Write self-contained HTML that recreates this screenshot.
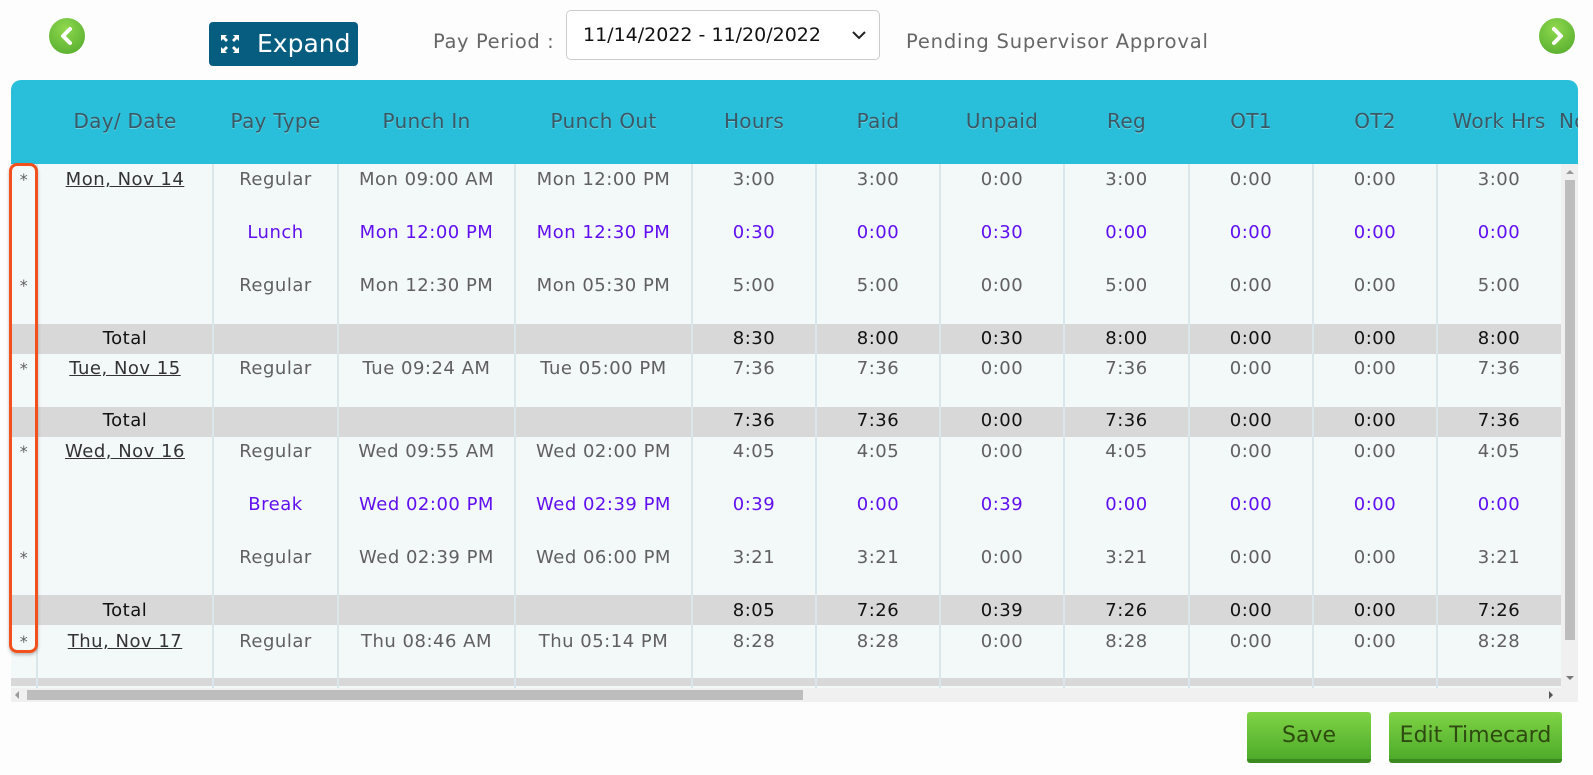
<!DOCTYPE html>
<html><head><meta charset="utf-8"><style>
*{margin:0;padding:0;box-sizing:border-box}
body{width:1593px;height:775px;background:#fdfdfd;font-family:"DejaVu Sans","Liberation Sans",sans-serif;position:relative;overflow:hidden}
.abs{position:absolute}
.circ{position:absolute;width:36px;height:36px;border-radius:50%;background:radial-gradient(circle at 45% 30%,#8fd84e,#4fa82a)}
.circ svg{position:absolute;left:0;top:0}
.tbl{position:absolute;left:11px;top:80px;width:1567px;height:622px;overflow:hidden;border-radius:10px 10px 0 0;background:#f3f8f8}
.hdr{position:absolute;left:0;top:0;width:1567px;height:84px;background:#29bfda}
.h{position:absolute;top:29px;font-size:20px;color:#3b5864;text-align:center;white-space:nowrap;text-shadow:0 1px 0 rgba(255,255,255,.3);letter-spacing:0.3px}
.vl{position:absolute;top:84px;width:2px;height:524px;background:#dbe6ea}
.band{position:absolute;left:0;width:1550px;height:30px;background:#d8d8d8}
.r{position:absolute;left:0;height:22px;width:1550px;font-size:18px;color:#606060;line-height:22px;letter-spacing:0.5px}
.r span{position:absolute;text-align:center;white-space:nowrap}
.b{color:#6010f0}
.t{color:#111}
.s1{left:0;width:26px;font-size:16px}
.s2{left:26px;width:176px}
.s3{left:202px;width:125px}
.s4{left:327px;width:177px}
.s5{left:504px;width:177px}
.s6{left:681px;width:124px}
.s7{left:805px;width:124px}
.s8{left:929px;width:124px}
.s9{left:1053px;width:125px}
.s10{left:1178px;width:124px}
.s11{left:1302px;width:124px}
.s12{left:1426px;width:124px}
u{text-decoration:underline;color:#333}
.btn{position:absolute;top:712px;height:51px;border-radius:3px;background:linear-gradient(#7fd445,#4eab2a);border-bottom:4px solid #3b8a1f;color:#2e4a10;font-size:22px;text-align:center;line-height:48px}
</style></head><body>
<div class="circ" style="left:49px;top:18px"><svg width="36" height="36" viewBox="0 0 36 36"><path d="M21 11l-7 7 7 7" stroke="#fff" stroke-width="4" fill="none" stroke-linecap="round" stroke-linejoin="round"/></svg></div>
<div class="abs" style="left:209px;top:22px;width:149px;height:44px;background:#075d7f;border-radius:4px;color:#fff;font-size:25px;line-height:44px">
<svg class="abs" style="left:12px;top:13px" width="18" height="18" viewBox="0 0 18 18" fill="#fff"><path d="M0 0h6L4 2l3 3-2 2-3-3-2 2zM18 0v6l-2-2-3 3-2-2 3-3-2-2zM0 18v-6l2 2 3-3 2 2-3 3 2 2zM18 18h-6l2-2-3-3 2-2 3 3 2-2z"/></svg>
<span class="abs" style="left:48px;top:0">Expand</span></div>
<div class="abs" style="left:433px;top:30px;font-size:19.5px;color:#666;letter-spacing:0.6px">Pay Period :</div>
<div class="abs" style="left:566px;top:10px;width:314px;height:50px;border:1px solid #ccc;border-radius:5px;background:#fff;font-size:19px;color:#111;line-height:48px;padding-left:16px">11/14/2022 - 11/20/2022
<svg class="abs" style="right:12px;top:19px" width="16" height="10" viewBox="0 0 16 10"><path d="M2 2l6 6 6-6" stroke="#222" stroke-width="2" fill="none"/></svg></div>
<div class="abs" style="left:906px;top:30px;font-size:19.5px;color:#666;letter-spacing:0.8px">Pending Supervisor Approval</div>
<div class="circ" style="left:1539px;top:18px"><svg width="36" height="36" viewBox="0 0 36 36"><path d="M15 11l7 7-7 7" stroke="#fff" stroke-width="4" fill="none" stroke-linecap="round" stroke-linejoin="round"/></svg></div>

<div class="tbl">
<div class="hdr">
<span class="h" style="left:26px;width:176px">Day/ Date</span>
<span class="h" style="left:202px;width:125px">Pay Type</span>
<span class="h" style="left:327px;width:177px">Punch In</span>
<span class="h" style="left:504px;width:177px">Punch Out</span>
<span class="h" style="left:681px;width:124px">Hours</span>
<span class="h" style="left:805px;width:124px">Paid</span>
<span class="h" style="left:929px;width:124px">Unpaid</span>
<span class="h" style="left:1053px;width:125px">Reg</span>
<span class="h" style="left:1178px;width:124px">OT1</span>
<span class="h" style="left:1302px;width:124px">OT2</span>
<span class="h" style="left:1426px;width:124px">Work Hrs</span>
<span class="h" style="left:1548px">No</span>
</div>
<div class="band" style="top:244px"></div>
<div class="band" style="top:327px"></div>
<div class="band" style="top:515px"></div>
<div class="band" style="top:598px;height:8px"></div>
<div class="vl" style="left:25px"></div><div class="vl" style="left:201px"></div><div class="vl" style="left:326px"></div><div class="vl" style="left:503px"></div><div class="vl" style="left:680px"></div><div class="vl" style="left:804px"></div><div class="vl" style="left:928px"></div><div class="vl" style="left:1052px"></div><div class="vl" style="left:1177px"></div><div class="vl" style="left:1301px"></div><div class="vl" style="left:1425px"></div>

<div class="r" style="top:89px"><span class="s1">*</span><span class="s2"><u>Mon, Nov 14</u></span><span class="s3">Regular</span><span class="s4">Mon 09:00 AM</span><span class="s5">Mon 12:00 PM</span><span class="s6">3:00</span><span class="s7">3:00</span><span class="s8">0:00</span><span class="s9">3:00</span><span class="s10">0:00</span><span class="s11">0:00</span><span class="s12">3:00</span></div>
<div class="r b" style="top:142px"><span class="s3">Lunch</span><span class="s4">Mon 12:00 PM</span><span class="s5">Mon 12:30 PM</span><span class="s6">0:30</span><span class="s7">0:00</span><span class="s8">0:30</span><span class="s9">0:00</span><span class="s10">0:00</span><span class="s11">0:00</span><span class="s12">0:00</span></div>
<div class="r" style="top:195px"><span class="s1">*</span><span class="s3">Regular</span><span class="s4">Mon 12:30 PM</span><span class="s5">Mon 05:30 PM</span><span class="s6">5:00</span><span class="s7">5:00</span><span class="s8">0:00</span><span class="s9">5:00</span><span class="s10">0:00</span><span class="s11">0:00</span><span class="s12">5:00</span></div>
<div class="r t" style="top:248px"><span class="s2">Total</span><span class="s6">8:30</span><span class="s7">8:00</span><span class="s8">0:30</span><span class="s9">8:00</span><span class="s10">0:00</span><span class="s11">0:00</span><span class="s12">8:00</span></div>
<div class="r" style="top:278px"><span class="s1">*</span><span class="s2"><u>Tue, Nov 15</u></span><span class="s3">Regular</span><span class="s4">Tue 09:24 AM</span><span class="s5">Tue 05:00 PM</span><span class="s6">7:36</span><span class="s7">7:36</span><span class="s8">0:00</span><span class="s9">7:36</span><span class="s10">0:00</span><span class="s11">0:00</span><span class="s12">7:36</span></div>
<div class="r t" style="top:330px"><span class="s2">Total</span><span class="s6">7:36</span><span class="s7">7:36</span><span class="s8">0:00</span><span class="s9">7:36</span><span class="s10">0:00</span><span class="s11">0:00</span><span class="s12">7:36</span></div>
<div class="r" style="top:361px"><span class="s1">*</span><span class="s2"><u>Wed, Nov 16</u></span><span class="s3">Regular</span><span class="s4">Wed 09:55 AM</span><span class="s5">Wed 02:00 PM</span><span class="s6">4:05</span><span class="s7">4:05</span><span class="s8">0:00</span><span class="s9">4:05</span><span class="s10">0:00</span><span class="s11">0:00</span><span class="s12">4:05</span></div>
<div class="r b" style="top:414px"><span class="s3">Break</span><span class="s4">Wed 02:00 PM</span><span class="s5">Wed 02:39 PM</span><span class="s6">0:39</span><span class="s7">0:00</span><span class="s8">0:39</span><span class="s9">0:00</span><span class="s10">0:00</span><span class="s11">0:00</span><span class="s12">0:00</span></div>
<div class="r" style="top:467px"><span class="s1">*</span><span class="s3">Regular</span><span class="s4">Wed 02:39 PM</span><span class="s5">Wed 06:00 PM</span><span class="s6">3:21</span><span class="s7">3:21</span><span class="s8">0:00</span><span class="s9">3:21</span><span class="s10">0:00</span><span class="s11">0:00</span><span class="s12">3:21</span></div>
<div class="r t" style="top:520px"><span class="s2">Total</span><span class="s6">8:05</span><span class="s7">7:26</span><span class="s8">0:39</span><span class="s9">7:26</span><span class="s10">0:00</span><span class="s11">0:00</span><span class="s12">7:26</span></div>
<div class="r" style="top:551px"><span class="s1">*</span><span class="s2"><u>Thu, Nov 17</u></span><span class="s3">Regular</span><span class="s4">Thu 08:46 AM</span><span class="s5">Thu 05:14 PM</span><span class="s6">8:28</span><span class="s7">8:28</span><span class="s8">0:00</span><span class="s9">8:28</span><span class="s10">0:00</span><span class="s11">0:00</span><span class="s12">8:28</span></div>

<div class="abs" style="left:1550px;top:84px;width:17px;height:524px;background:#f0f0f0">
<div class="abs" style="left:4px;top:16px;width:10px;height:460px;background:#bdbdbd"></div>
<div class="abs" style="left:5px;top:6px;border:4px solid transparent;border-bottom:4px solid #999;border-top:0"></div>
<div class="abs" style="left:5px;top:512px;border:4px solid transparent;border-top:4px solid #777;border-bottom:0"></div></div>
<div class="abs" style="left:0;top:608px;width:1567px;height:14px;background:#f0f0f0">
<div class="abs" style="left:16px;top:2px;width:776px;height:10px;background:#bdbdbd"></div>
<div class="abs" style="left:1538px;top:3px;border:4px solid transparent;border-left:4px solid #555;border-right:0"></div>
<div class="abs" style="left:4px;top:3px;border:4px solid transparent;border-right:4px solid #999;border-left:0"></div></div>
</div>

<div class="abs" style="left:9px;top:163px;width:29px;height:490px;border:3px solid #f2501d;border-radius:8px;box-shadow:0 2px 3px rgba(0,0,0,.25)"></div>

<div class="btn" style="left:1247px;width:124px">Save</div>
<div class="btn" style="left:1389px;width:173px">Edit Timecard</div>
</body></html>
